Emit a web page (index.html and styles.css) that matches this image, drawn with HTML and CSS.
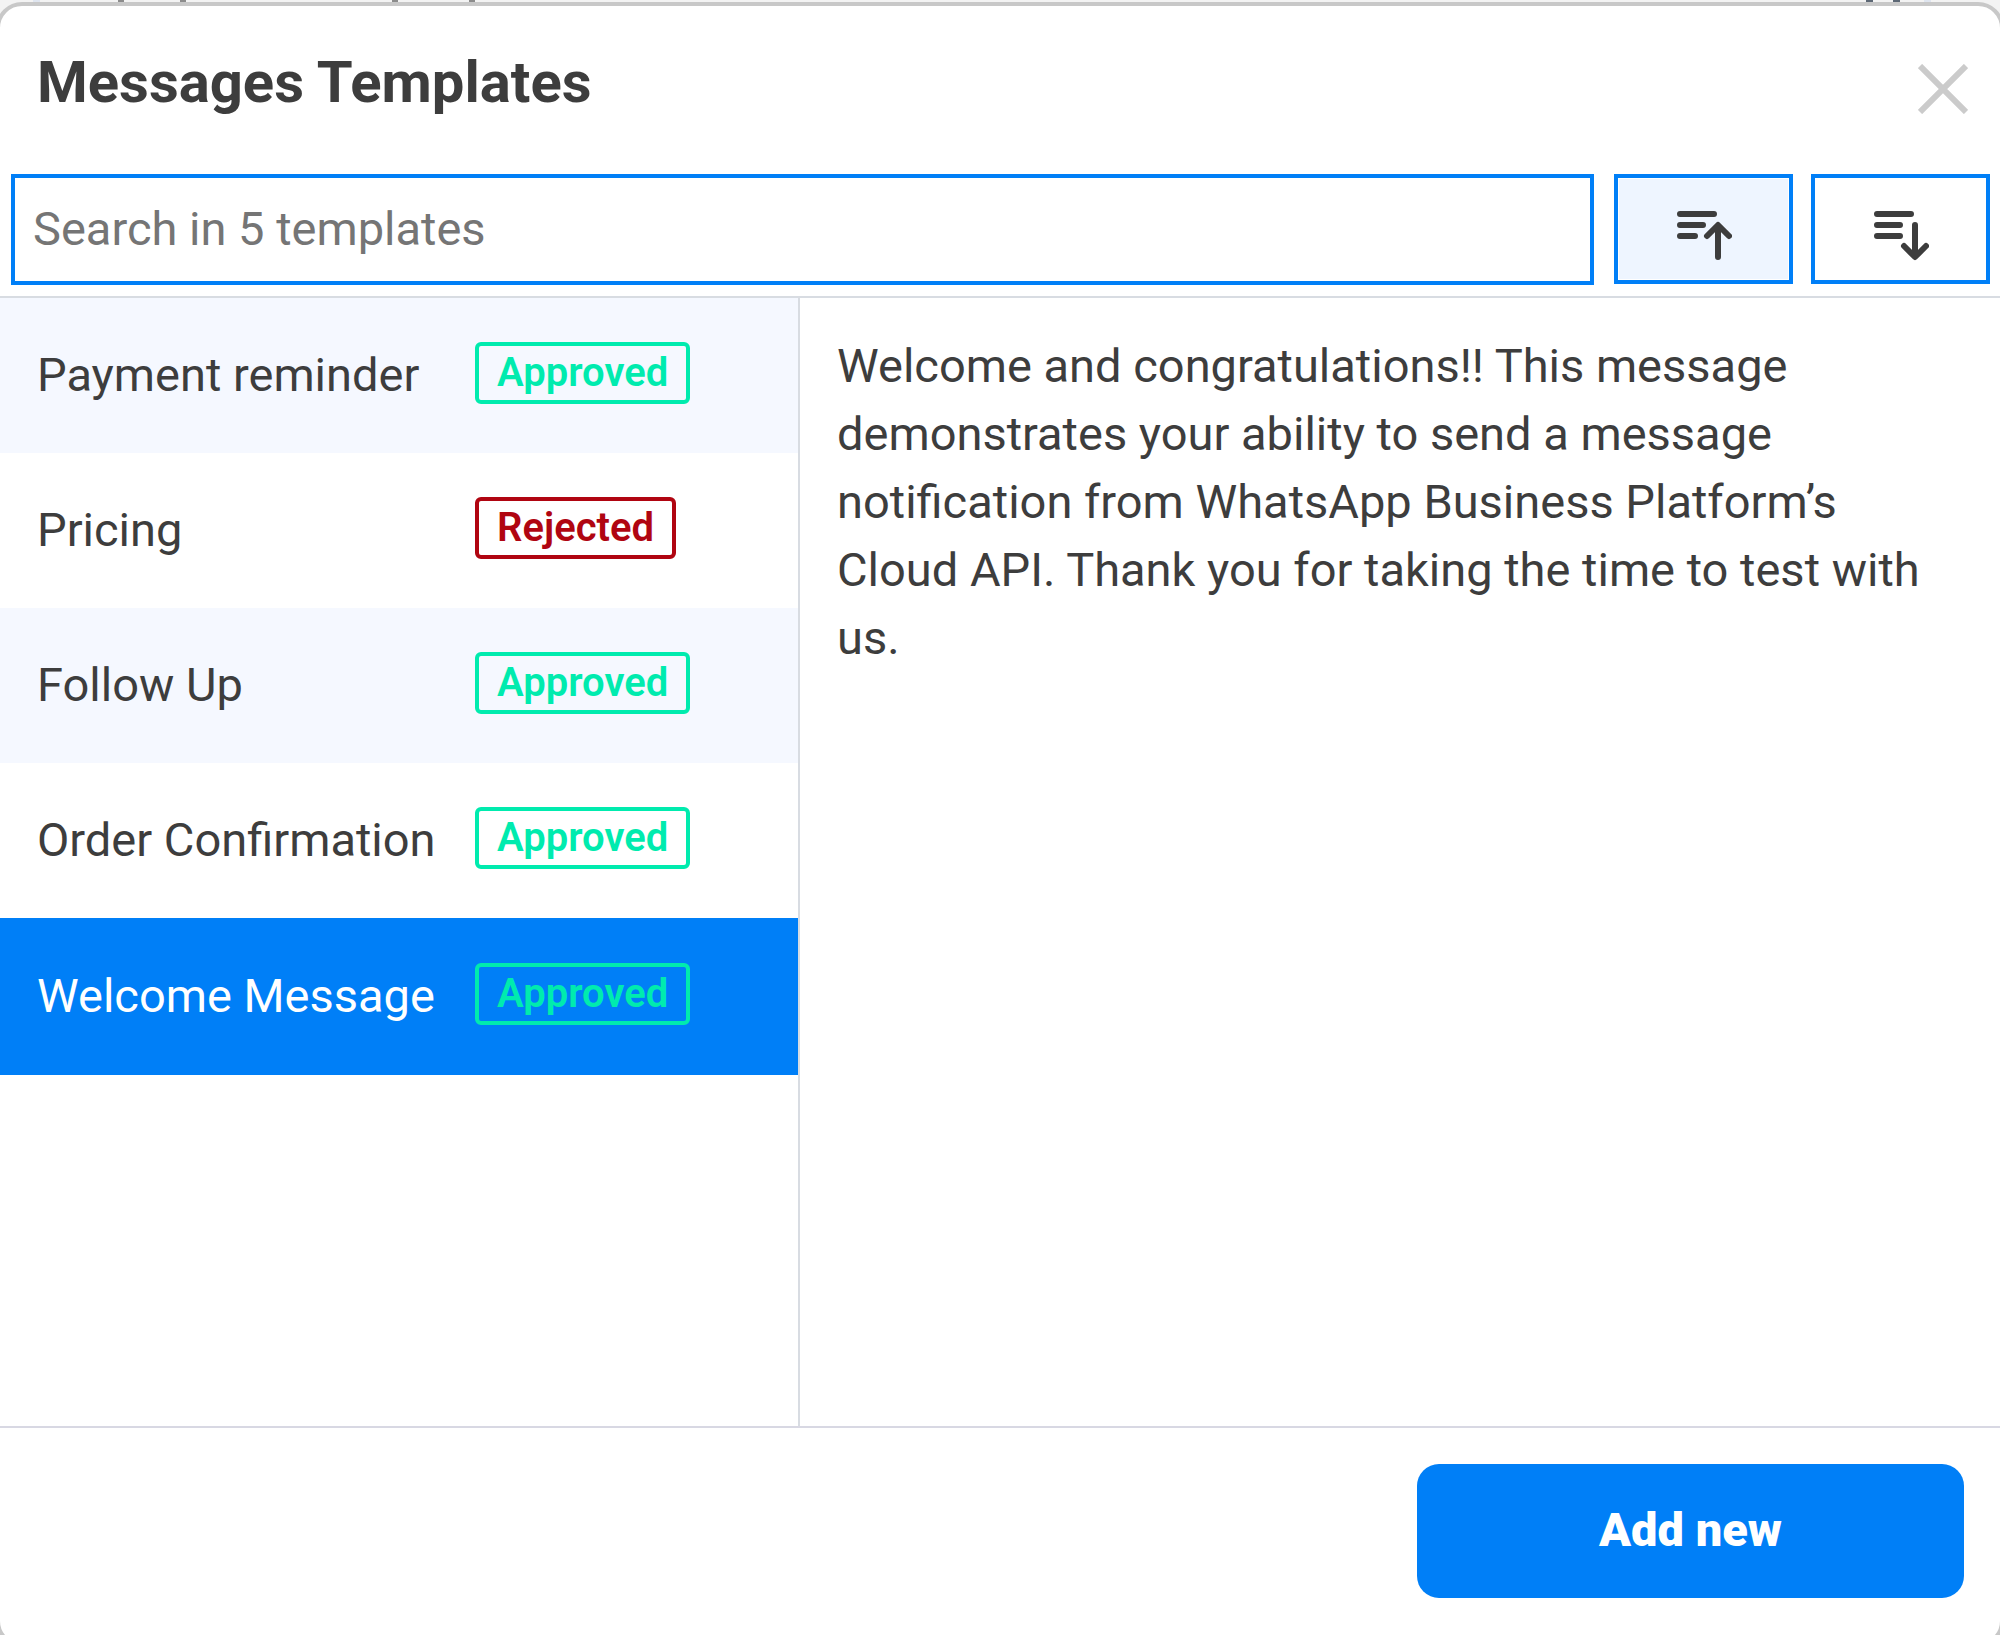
FILE: index.html
```html
<!DOCTYPE html>
<html lang="en">
<head>
  <meta charset="UTF-8">
  <meta name="viewport" content="width=device-width, initial-scale=1.0">
  <title>Messages Templates</title>
  <link rel="stylesheet" href="styles.css">
</head>
<body>

<div class="backdrop">
  <!-- bottom edge of the page header that stays visible above the dialog -->
  <div class="backdrop-edge" aria-hidden="true">
    <svg width="500" height="2">
      <rect x="33" width="7" height="2" fill="#dfe5ef"/>
      <rect x="118" width="6" height="2" fill="#8c8c8c"/>
      <rect x="180" width="6" height="2" fill="#8c8c8c"/>
      <rect x="392" width="6" height="2" fill="#8c8c8c"/>
      <rect x="469" width="6" height="2" fill="#8c8c8c"/>
    </svg>
    <svg width="200" height="2">
      <rect x="66" width="7" height="2" fill="#5d6875"/>
      <rect x="93" width="7" height="2" fill="#5d6875"/>
      <rect x="124" width="7" height="2" fill="#dfe5ef"/>
    </svg>
  </div>

  <div class="modal" role="dialog" aria-labelledby="modalTitle">
    <div class="modal-header">
      <h1 class="modal-title" id="modalTitle">Messages Templates</h1>
      <button class="close" type="button" aria-label="Close">
        <svg width="50" height="50" viewBox="0 0 50 50">
          <path d="M2 2L48 48M48 2L2 48" stroke="#cbcbcb" stroke-width="6"/>
        </svg>
      </button>
    </div>

    <div class="toolbar">
      <input class="search" type="text" placeholder="Search in 5 templates" aria-label="Search templates">
      <div class="sort-buttons">
        <button class="sort active" type="button" aria-label="Sort ascending">
          <svg width="56" height="52" viewBox="0 0 56 52">
            <path d="M4 5H38M4 16H27M4 27H19M42 48V17M31 27L42 16L53 27"/>
          </svg>
        </button>
        <button class="sort" type="button" aria-label="Sort descending">
          <svg width="56" height="52" viewBox="0 0 56 52">
            <path d="M4 5H38M4 16H27M4 27H27M42 16V47M31 37L42 48L53 37"/>
          </svg>
        </button>
      </div>
    </div>

    <div class="content">
      <div class="template-list">
        <button class="template" type="button">
          <span class="name">Payment reminder</span>
          <span class="status approved">Approved</span>
        </button>
        <button class="template" type="button">
          <span class="name">Pricing</span>
          <span class="status rejected">Rejected</span>
        </button>
        <button class="template" type="button">
          <span class="name">Follow Up</span>
          <span class="status approved">Approved</span>
        </button>
        <button class="template" type="button">
          <span class="name">Order Confirmation</span>
          <span class="status approved">Approved</span>
        </button>
        <button class="template selected" type="button">
          <span class="name">Welcome Message</span>
          <span class="status approved">Approved</span>
        </button>
      </div>
      <div class="preview">
        <p>Welcome and congratulations!! This message demonstrates your ability to send a message notification from WhatsApp Business Platform’s Cloud API. Thank you for taking the time to test with us.</p>
      </div>
    </div>

    <div class="modal-footer">
      <button class="add-new" type="button">Add new</button>
    </div>
  </div>
</div>

</body>
</html>
```
FILE: styles.css
```css
* {
  box-sizing: border-box;
}

body {
  margin: 0;
  font-family: Roboto, sans-serif;
  font-size: 47px;
  font-weight: 450;
  color: #3d3d3d;
}

button,
input {
  font: inherit;
  color: inherit;
  margin: 0;
}

button {
  cursor: pointer;
}

.backdrop {
  display: flex;
  flex-direction: column;
  height: 100vh;
  overflow: hidden;
  background-color: #f3f3f3;
}

.backdrop-edge {
  display: flex;
  flex-shrink: 0;
  justify-content: space-between;
  height: 2px;
}

/* the dialog runs a little past the window on the other three sides */
.modal {
  display: flex;
  flex-direction: column;
  flex: none;
  height: calc(100vh + 10px);
  margin: 0 -4px;
  border: 4px solid #c8c8c8;
  border-radius: 26px;
  background-color: #fff;
}

.modal-header {
  display: flex;
  justify-content: space-between;
  align-items: flex-start;
  height: 168px;
  padding: 42px 32px 0 37px;
}

.modal-title {
  margin: 0;
  font-size: 58px;
  font-weight: 700;
  line-height: 68px;
}

.close {
  display: flex;
  margin-top: 16px;
  padding: 0;
  border: none;
  background: none;
}

.toolbar {
  display: flex;
  gap: 20px;
  padding: 0 10px 11px 11px;
  border-bottom: 2px solid #d8dce2;
}

.search {
  flex: 1;
  min-width: 0;
  height: 111px;
  padding: 0 18px 2px;
  border: 4px solid #007ff7;
  border-radius: 0;
  background-color: #fff;
  outline: none;
}

.search::placeholder {
  color: #757575;
}

.sort-buttons {
  display: flex;
  gap: 18px;
}

.sort {
  display: flex;
  align-items: center;
  justify-content: center;
  width: 179px;
  height: 110px;
  padding: 12px 0 0;
  border: 4px solid #007ff7;
  background-color: #fff;
}

.sort.active {
  background-color: #eef5ff;
  box-shadow: inset 0 0 0 1px #fff;
}

.sort path {
  fill: none;
  stroke: #3d3d3d;
  stroke-width: 6;
  stroke-linecap: round;
  stroke-linejoin: round;
}

.content {
  display: flex;
  flex: 1;
}

.template-list {
  width: 40%;
  border-right: 2px solid #d8dce2;
}

.template {
  display: grid;
  grid-template-columns: 400px auto;
  justify-content: start;
  align-items: center;
  gap: 38px;
  width: 100%;
  height: 155px;
  padding: 0 37px 2px;
  border: none;
  background-color: #fff;
  text-align: left;
}

.template:nth-child(odd) {
  background-color: #f5f8ff;
}

.template.selected {
  height: 157px;
  background-color: #007ff7;
  color: #fff;
}

.name {
  white-space: nowrap;
}

.status {
  height: 62px;
  margin-bottom: 3px;
  padding: 0 18px;
  border: 4px solid;
  border-radius: 6px;
  font-size: 40px;
  font-weight: 600;
  line-height: 53px;
}

.approved {
  color: #00ebae;
}

.rejected {
  color: #b00511;
}

.preview {
  flex: 1;
  padding: 34px 37px;
}

.preview p {
  margin: 0;
  line-height: 68px;
}

.modal-footer {
  display: flex;
  justify-content: flex-end;
  padding: 36px 36px 45px;
  border-top: 2px solid #d8d8e3;
}

.add-new {
  width: 547px;
  height: 134px;
  padding: 0 0 4px;
  border: none;
  border-radius: 22px;
  background-color: #007ff7;
  color: #fff;
  font-weight: 900;
}
```
